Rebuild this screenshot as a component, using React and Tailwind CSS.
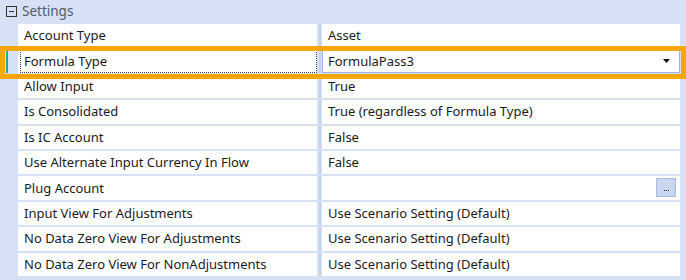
import React from "react";

const rows = [
  ["Account Type", "Asset"],
  ["Formula Type", "FormulaPass3"],
  ["Allow Input", "True"],
  ["Is Consolidated", "True (regardless of Formula Type)"],
  ["Is IC Account", "False"],
  ["Use Alternate Input Currency In Flow", "False"],
  ["Plug Account", ""],
  ["Input View For Adjustments", "Use Scenario Setting (Default)"],
  ["No Data Zero View For Adjustments", "Use Scenario Setting (Default)"],
  ["No Data Zero View For NonAdjustments", "Use Scenario Setting (Default)"],
];

export default function App() {
  return (
    <div
      className="relative w-[686px] h-[280px] bg-[#d6e1f5] overflow-hidden text-[13px] text-[#1b1b1b]"
      style={{ fontFamily: '"Noto Sans", "Open Sans", sans-serif' }}
    >
      <div className="flex items-center h-[23px] pl-[6px] gap-[5px]">
        <div className="w-[11px] h-[11px] border border-[#333] flex items-center justify-center">
          <div className="w-[5px] h-[1px] bg-[#333]" />
        </div>
        <span className="text-[#505a6a] text-[13.5px]">Settings</span>
      </div>
      <div className="flex flex-col gap-[2px] pt-[1px]">
        {rows.map(([name, value], i) => (
          <div key={i} className="relative flex h-[23.4px]">
            {i === 1 && (
              <div className="absolute left-[6px] top-0 bottom-0 w-[2px] bg-[#1fae94]" />
            )}
            <div className="relative w-[299px] ml-[18px] bg-white flex items-center pl-[6px]">
              {i === 1 && (
                <div className="absolute left-[2px] top-0 bottom-0 right-0 border-l border-b border-r border-dotted border-[#444]" />
              )}
              <span className="relative leading-none">{name}</span>
            </div>
            <div className="w-[5px] flex justify-center">
              <div className="w-[2px] h-full bg-[#c3d2ec]" />
            </div>
            <div className="relative w-[358px] bg-white flex items-center pl-[6px]">
              {i === 1 ? (
                <div className="absolute inset-0 border border-[#9db6e3] flex items-center pl-[5px] pr-[9px] justify-between">
                  <span className="leading-none">{value}</span>
                  <svg width="7" height="4" viewBox="0 0 7 4">
                    <path d="M0 0 H7 L3.5 4 Z" fill="#111" />
                  </svg>
                </div>
              ) : (
                <span className="leading-none">{value}</span>
              )}
              {i === 6 && (
                <div className="absolute right-[4px] top-[2px] w-[20px] h-[19px] bg-[#c9d6ef] border border-[#a9bde2] flex items-end justify-center pb-[5px]">
                  <div className="flex gap-[1px]">
                    <div className="w-[1px] h-[1px] bg-[#333]" />
                    <div className="w-[1px] h-[1px] bg-[#333]" />
                    <div className="w-[1px] h-[1px] bg-[#333]" />
                  </div>
                </div>
              )}
            </div>
          </div>
        ))}
      </div>
      <div className="absolute left-0 top-[46px] w-[686px] h-[33px] border-[5px] border-[#f5a70c] pointer-events-none" />
    </div>
  );
}
